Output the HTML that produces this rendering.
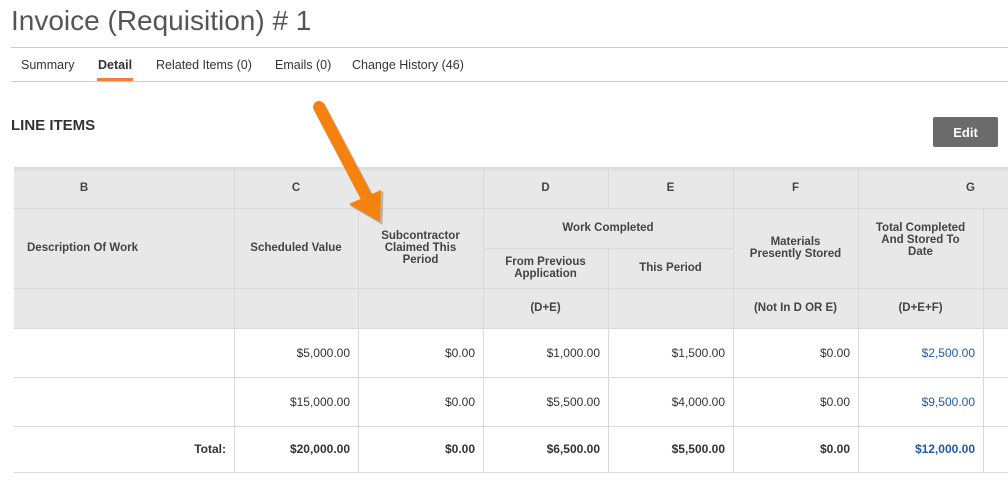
<!DOCTYPE html>
<html><head><meta charset="utf-8"><style>
*{margin:0;padding:0;box-sizing:border-box}
body{width:1008px;height:481px;overflow:hidden;background:#fff;font-family:"Liberation Sans",sans-serif;color:#333;position:relative}
.a{position:absolute}
.c{position:absolute;display:flex;align-items:center;justify-content:center;text-align:center;font-size:11.5px;font-weight:bold;line-height:12px;color:#444}
.r{position:absolute;display:flex;align-items:center;justify-content:flex-end;font-size:12px;color:#333;padding-right:8px}
.b{font-weight:bold}
.bl{color:#1f5aa6}
.t{position:absolute;top:58px;font-size:12.5px}
</style></head><body>
<div class="a" style="left:11px;top:5px;font-size:28px;color:#555;">Invoice (Requisition) # 1</div>
<div class="a" style="left:11px;top:47px;width:997px;height:1px;background:#ccc"></div>
<div class="t" style="left:21px;">Summary</div>
<div class="t b" style="left:98px;">Detail</div>
<div class="t" style="left:156px;">Related Items (0)</div>
<div class="t" style="left:275px;">Emails (0)</div>
<div class="t" style="left:352px;">Change History (46)</div>
<div class="a" style="left:11px;top:81px;width:997px;height:1px;background:#ccc"></div>
<div class="a" style="left:97px;top:78px;width:36px;height:3px;background:#f47e3a"></div>
<div class="a b" style="left:11px;top:117px;font-size:15px;color:#333">LINE ITEMS</div>
<div class="a b" style="left:933px;top:117px;width:65px;height:30px;background:#6b6b6b;color:#fff;border-radius:2px;font-size:13px;display:flex;align-items:center;justify-content:center">Edit</div>

<div class="a" style="left:14px;top:167px;width:994px;height:161px;background:#e8e8e8;border-top:3px solid #ddd"></div>
<svg class="a" style="left:0;top:0" width="1008" height="481">
<g stroke="#d9d9d9" stroke-width="1">
<line x1="14" y1="208.5" x2="1008" y2="208.5"/>
<line x1="483" y1="248.5" x2="733" y2="248.5"/>
<line x1="14" y1="288.5" x2="1008" y2="288.5"/>
<line x1="14" y1="328.5" x2="1008" y2="328.5"/>
<line x1="234.5" y1="168" x2="234.5" y2="472"/>
<line x1="358.5" y1="208" x2="358.5" y2="472"/>
<line x1="483.5" y1="168" x2="483.5" y2="472"/>
<line x1="608.5" y1="168" x2="608.5" y2="208"/>
<line x1="608.5" y1="248" x2="608.5" y2="472"/>
<line x1="733.5" y1="168" x2="733.5" y2="472"/>
<line x1="858.5" y1="168" x2="858.5" y2="472"/>
<line x1="983.5" y1="208" x2="983.5" y2="472"/>
<line x1="14" y1="377.5" x2="1008" y2="377.5"/>
<line x1="14" y1="426.5" x2="1008" y2="426.5"/>
<line x1="14" y1="472.5" x2="1008" y2="472.5"/>
</g>
</svg>
<div class="c" style="left:14px;top:168px;width:140px;height:40px">B</div>
<div class="c" style="left:234px;top:168px;width:124px;height:40px">C</div>
<div class="c" style="left:483px;top:168px;width:125px;height:40px">D</div>
<div class="c" style="left:608px;top:168px;width:125px;height:40px">E</div>
<div class="c" style="left:733px;top:168px;width:125px;height:40px">F</div>
<div class="c" style="left:858px;top:168px;width:225px;height:40px">G</div>
<div class="c" style="left:27px;top:208px;height:80px;justify-content:flex-start">Description Of Work</div>
<div class="c" style="left:234px;top:208px;width:124px;height:80px">Scheduled Value</div>
<div class="c" style="left:358px;top:208px;width:125px;height:80px">Subcontractor<br>Claimed This<br>Period</div>
<div class="c" style="left:483px;top:208px;width:250px;height:40px">Work Completed</div>
<div class="c" style="left:483px;top:248px;width:125px;height:40px">From Previous<br>Application</div>
<div class="c" style="left:608px;top:248px;width:125px;height:40px">This Period</div>
<div class="c" style="left:733px;top:208px;width:125px;height:80px">Materials<br>Presently Stored</div>
<div class="c" style="left:858px;top:208px;width:125px;height:64px">Total Completed<br>And Stored To<br>Date</div>
<div class="c" style="left:483px;top:288px;width:125px;height:40px">(D+E)</div>
<div class="c" style="left:733px;top:288px;width:125px;height:40px">(Not In D OR E)</div>
<div class="c" style="left:858px;top:288px;width:125px;height:40px">(D+E+F)</div>

<div class="r" style="left:234px;top:328px;width:124px;height:49px">$5,000.00</div>
<div class="r" style="left:358px;top:328px;width:125px;height:49px">$0.00</div>
<div class="r" style="left:483px;top:328px;width:125px;height:49px">$1,000.00</div>
<div class="r" style="left:608px;top:328px;width:125px;height:49px">$1,500.00</div>
<div class="r" style="left:733px;top:328px;width:125px;height:49px">$0.00</div>
<div class="r bl" style="left:858px;top:328px;width:125px;height:49px">$2,500.00</div>

<div class="r" style="left:234px;top:377px;width:124px;height:49px">$15,000.00</div>
<div class="r" style="left:358px;top:377px;width:125px;height:49px">$0.00</div>
<div class="r" style="left:483px;top:377px;width:125px;height:49px">$5,500.00</div>
<div class="r" style="left:608px;top:377px;width:125px;height:49px">$4,000.00</div>
<div class="r" style="left:733px;top:377px;width:125px;height:49px">$0.00</div>
<div class="r bl" style="left:858px;top:377px;width:125px;height:49px">$9,500.00</div>

<div class="r b" style="left:14px;top:426px;width:220px;height:46px">Total:</div>
<div class="r b" style="left:234px;top:426px;width:124px;height:46px">$20,000.00</div>
<div class="r b" style="left:358px;top:426px;width:125px;height:46px">$0.00</div>
<div class="r b" style="left:483px;top:426px;width:125px;height:46px">$6,500.00</div>
<div class="r b" style="left:608px;top:426px;width:125px;height:46px">$5,500.00</div>
<div class="r b" style="left:733px;top:426px;width:125px;height:46px">$0.00</div>
<div class="r b bl" style="left:858px;top:426px;width:125px;height:46px">$12,000.00</div>

<svg class="a" style="left:0;top:0" width="1008" height="481">
<g transform="translate(2,2)" fill="#555" opacity="0.35" stroke="#555">
<line x1="319" y1="107" x2="368" y2="200" stroke-width="12" stroke-linecap="round"/>
<polygon points="349,204 381,190 380,222"/>
</g>
<line x1="319" y1="107" x2="368" y2="200" stroke="#f5820f" stroke-width="12" stroke-linecap="round"/>
<polygon points="349,204 381,190 380,222" fill="#f5820f"/>
</svg>
</body></html>
